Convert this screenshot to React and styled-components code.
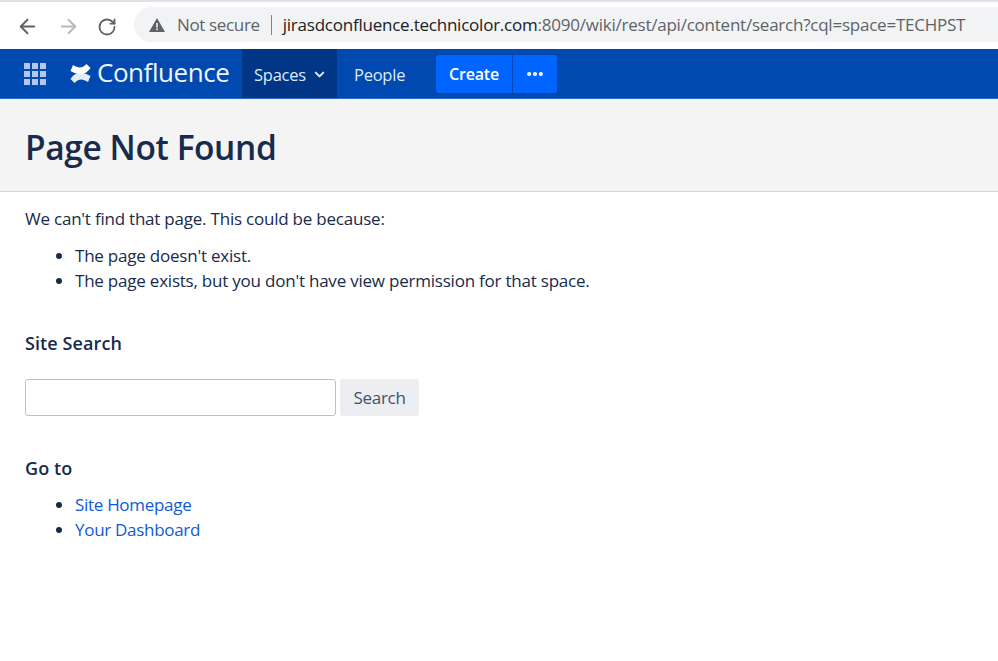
import styled, { createGlobalStyle } from "styled-components";
import { ArrowLeft, ArrowRight, RotateCw, MoreHorizontal, ChevronDown } from "lucide-react";

const GlobalStyle = createGlobalStyle`
  html, body { margin: 0; padding: 0; background: #fff; }
  body { font-family: "Open Sans", "Noto Sans", sans-serif; color: #172b4d; overflow: hidden; }
`;

function App() {
  return (
    <>
      <GlobalStyle />
      <Chrome>
        <ChromeIcons>
          <ArrowLeft size={23} color="#5f6368" strokeWidth={2} />
          <ArrowRight size={23} color="#b8babd" strokeWidth={2} />
          <RotateCw size={20} color="#5f6368" strokeWidth={2.2} />
        </ChromeIcons>
        <UrlBar>
          <svg width="16" height="14" viewBox="0 0 16 14">
            <path d="M8 0 L16 14 H0 Z" fill="#5f6368" />
            <rect x="7.2" y="5" width="1.6" height="4.5" fill="#f1f3f4" />
            <rect x="7.2" y="10.5" width="1.6" height="1.6" fill="#f1f3f4" />
          </svg>
          <NotSecure>Not secure</NotSecure>
          <UrlDivider />
          <Url>
            <b>jirasdconfluence.technicolor.com</b>:8090/wiki/rest/api/content/search?cql=space=TECHPST
          </Url>
        </UrlBar>
      </Chrome>

      <Nav>
        <AppGrid>
          {Array.from({ length: 9 }).map((_, i) => (
            <span key={i} />
          ))}
        </AppGrid>
        <Logo>
          <svg width="21" height="19" viewBox="0 0 21 19">
            <path d="M0.5 15 C5 8.5 10 6.5 20.5 12 L18 18 C12.5 14.5 9 14.5 4.5 19 Z" fill="#e6ecf6" />
            <path d="M20.5 4 C16 10.5 11 12.5 0.5 7 L3 1 C8.5 4.5 12 4.5 16.5 0 Z" fill="#ffffff" />
          </svg>
          <LogoText>Confluence</LogoText>
        </Logo>
        <NavItem $active>
          Spaces
          <ChevronDown size={15} strokeWidth={3.2} color="#deebff" />
        </NavItem>
        <NavItem>People</NavItem>
        <CreateGroup>
          <CreateButton>Create</CreateButton>
          <MoreButton>
            <MoreHorizontal size={20} strokeWidth={3} color="#fff" />
          </MoreButton>
        </CreateGroup>
      </Nav>

      <PageHeader>
        <Title>Page Not Found</Title>
      </PageHeader>

      <Main>
        <Intro>We can't find that page. This could be because:</Intro>
        <List>
          <li>The page doesn't exist.</li>
          <li>The page exists, but you don't have view permission for that space.</li>
        </List>

        <SearchHeading>Site Search</SearchHeading>
        <SearchRow>
          <SearchInput />
          <SearchButton>Search</SearchButton>
        </SearchRow>

        <GoToHeading>Go to</GoToHeading>
        <List>
          <li><Link href="#">Site Homepage</Link></li>
          <li><Link href="#">Your Dashboard</Link></li>
        </List>
      </Main>
    </>
  );
}

const Chrome = styled.div`
  height: 47px;
  box-sizing: border-box;
  padding-top: 7px;
  border-top: 2px solid #dee1e6;
  display: flex;
  background: #fff;
`;

const ChromeIcons = styled.div`
  width: 134px;
  height: 35px;
  box-sizing: border-box;
  padding: 0 17px 0 16px;
  display: flex;
  align-items: center;
  justify-content: space-between;
  flex-shrink: 0;
`;

const UrlBar = styled.div`
  flex: 1;
  height: 35px;
  margin-top: -2px;
  box-sizing: border-box;
  background: #f1f3f4;
  border-radius: 18px 0 0 18px;
  padding-left: 15px;
  display: flex;
  align-items: center;
  white-space: nowrap;
  overflow: hidden;
  font-family: "Open Sans", sans-serif;
  font-size: 17px;
  color: #5f6368;
`;

const NotSecure = styled.span`
  margin-left: 12px;
  letter-spacing: -0.35px;
`;

const UrlDivider = styled.span`
  width: 1px;
  height: 20px;
  background: #80868b;
  margin: 0 11px 0 11px;
`;

const Url = styled.span`
  letter-spacing: -0.23px;
  b {
    font-weight: 400;
    color: #202124;
  }
`;

const Nav = styled.div`
  margin-top: 2px;
  height: 50px;
  box-sizing: border-box;
  background: #0049b0;
  border-bottom: 1px solid #2a6ac8;
  display: flex;
  align-items: stretch;
  color: #deebff;
`;

const AppGrid = styled.div`
  width: 22px;
  height: 22px;
  margin: 14px 0 0 24px;
  display: grid;
  grid-template-columns: repeat(3, 6px);
  grid-auto-rows: 6px;
  gap: 2px;
  span {
    background: #b3c8e8;
  }
`;

const Logo = styled.div`
  margin-left: 24px;
  display: flex;
  align-items: center;
  gap: 6px;
  width: 172px;
`;

const LogoText = styled.span`
  font-size: 26px;
  color: #f0f5ff;
  letter-spacing: -0.45px;
  margin-top: -3px;
`;

const NavItem = styled.div`
  display: flex;
  align-items: center;
  gap: 6px;
  font-size: 16.5px;
  padding: 1px 0 0;
  width: ${(p) => (p.$active ? "95px" : "99px")};
  box-sizing: border-box;
  padding-left: ${(p) => (p.$active ? "12px" : "17px")};
  letter-spacing: -0.25px;
  background: ${(p) => (p.$active ? "#003685" : "transparent")};
`;

const CreateGroup = styled.div`
  display: flex;
  height: 38px;
  margin-top: 6px;
  border-radius: 3px;
  overflow: hidden;
  gap: 1px;
  background: #0049b0;
`;

const CreateButton = styled.div`
  width: 76px;
  background: #0065ff;
  color: #fff;
  font-weight: 600;
  font-size: 16px;
  letter-spacing: -0.2px;
  display: flex;
  align-items: center;
  justify-content: center;
`;

const MoreButton = styled.div`
  width: 44px;
  background: #0065ff;
  display: flex;
  align-items: center;
  justify-content: center;
`;

const PageHeader = styled.div`
  height: 93px;
  box-sizing: border-box;
  background: #f4f4f5;
  border-bottom: 1px solid #d3d5d9;
  padding: 4px 25px 0;
  display: flex;
  align-items: center;
`;

const Title = styled.h1`
  margin: 0;
  font-size: 33.5px;
  font-weight: 600;
  letter-spacing: -0.4px;
  color: #172b4d;
`;

const Main = styled.div`
  padding: 14px 25px 0;
  font-size: 17px;
  letter-spacing: -0.22px;
  line-height: 25px;
`;

const Intro = styled.p`
  margin: 0 0 12px;
`;

const List = styled.ul`
  margin: 0;
  padding-left: 50px;
`;

const SearchHeading = styled.h3`
  margin: 37px 0 0;
  font-size: 18px;
  font-weight: 600;
  line-height: 26px;
  letter-spacing: 0.1px;
`;

const GoToHeading = styled(SearchHeading)`
  margin: 39px 0 11px;
`;

const SearchRow = styled.div`
  display: flex;
  gap: 4px;
  margin-top: 23px;
`;

const SearchInput = styled.input`
  width: 311px;
  height: 37px;
  box-sizing: border-box;
  background: #fff;
  border: 1px solid #b9c1cf;
  border-radius: 3px;
`;

const SearchButton = styled.button`
  width: 79px;
  height: 37px;
  border: 0;
  border-radius: 3px;
  background: #eceef2;
  color: #42526e;
  font: inherit;
  letter-spacing: -0.3px;
`;

const Link = styled.a`
  color: #0f5bd6;
  text-decoration: none;
  letter-spacing: -0.3px;
`;

export default App;
